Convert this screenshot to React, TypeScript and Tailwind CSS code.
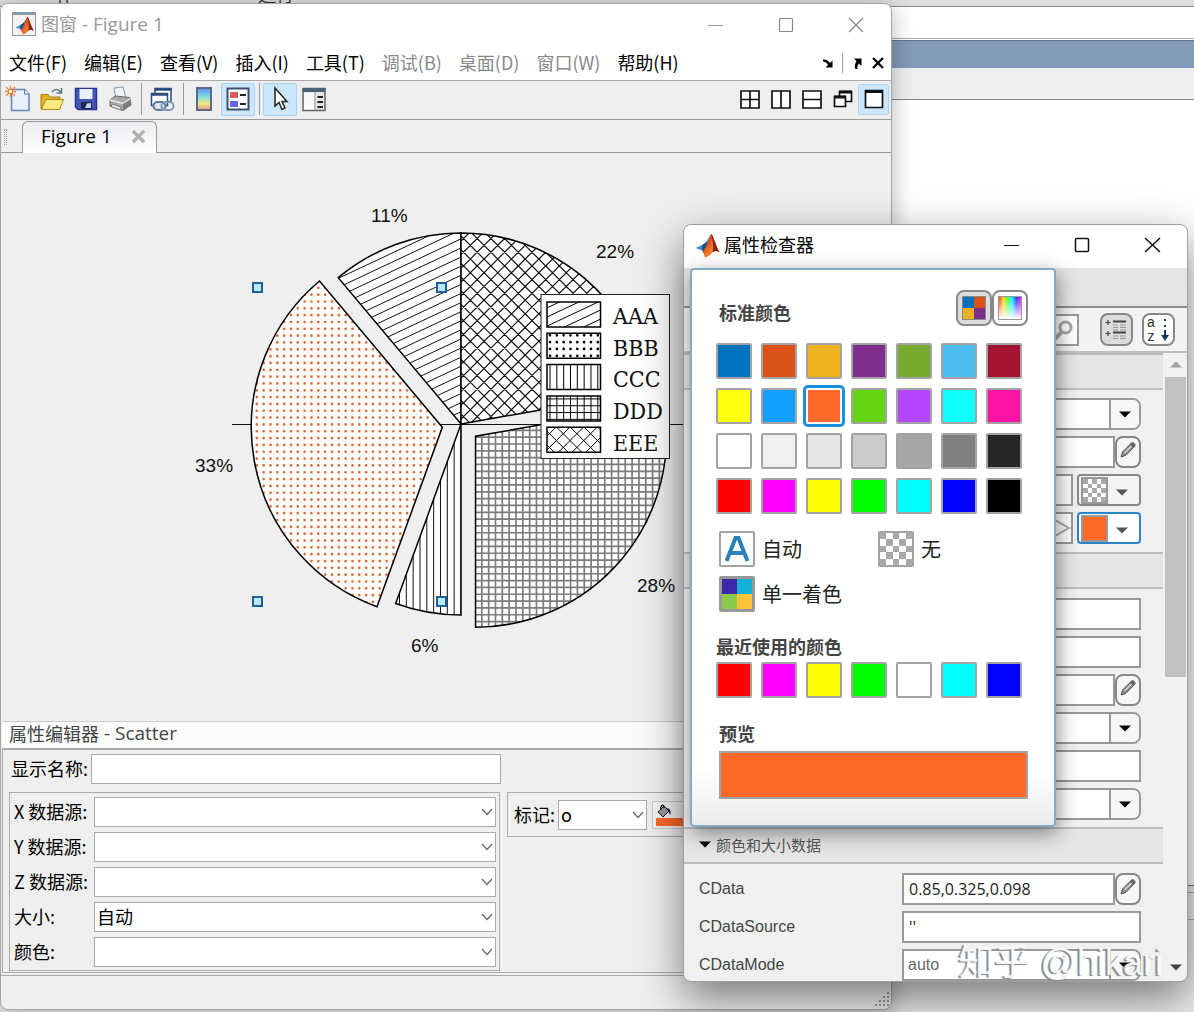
import { useState } from "react";
import type { ReactNode } from "react";

const STANDARD_COLORS = [
  "#0072bd", "#d95319", "#edb120", "#7e2f8e", "#77ac30", "#4dbeee", "#a2142f",
  "#ffff11", "#139fff", "#ff6929", "#64d413", "#b746ff", "#0fffff", "#ff13a6",
  "#ffffff", "#f0f0f0", "#e6e6e6", "#cccccc", "#a6a6a6", "#808080", "#262626",
  "#ff0000", "#ff00ff", "#ffff00", "#00ff00", "#00ffff", "#0000ff", "#000000",
];
const RECENT_COLORS = ["#ff0000", "#ff00ff", "#ffff00", "#00ff00", "#ffffff", "#00ffff", "#0000ff"];

// ---- Icons ----
const MatlabLogo = ({ size }: { size: number }) => (
  <svg width={size} height={size} viewBox="0 0 24 24">
    <defs>
      <linearGradient id="mlRed" x1="0" y1="0" x2="1" y2="1">
        <stop offset="0" stopColor="#5b1a12" />
        <stop offset="0.35" stopColor="#e0501e" />
        <stop offset="0.6" stopColor="#f08030" />
        <stop offset="1" stopColor="#9c1c10" />
      </linearGradient>
    </defs>
    <path d="M0.5 14.5L7 11.5L10 9.5C12 8 13 4 15.5 1.5L14 14L9 19L6.5 16.5Z" fill="#3f8ccb" />
    <path d="M7 11.5L10 9.5L12 7L10 17L7 17Z" fill="#1c4a78" />
    <path d="M15.5 1C17.5 2 19 10 23.5 18.5C20 16.5 18 17 15 20.5C13 22.5 11.5 23 9.5 23.5C9 21 8.5 20 7 17.5C11 16 12.5 6 15.5 1Z" fill="url(#mlRed)" />
    <path d="M15.5 1C17.5 2 19 10 23.5 18.5C20.5 16.8 19 16.8 17 18.5C18 12 17 6 15.5 1Z" fill="#8f2014" />
  </svg>
);

const NewIcon = () => (
  <svg width="26" height="26" viewBox="0 0 26 26">
    <path d="M6.5 3.5H19.5L24 8V24.5H6.5Z" fill="#e6f0fb" stroke="#6484b4" strokeWidth="1.5" />
    <path d="M19.5 3.5V8H24" fill="#fff" stroke="#4a6fa8" />
    <path d="M1 1L10 10M10 1L1 10M5.5 0V11M0 5.5H11" stroke="#e8884a" strokeWidth="1.3" />
    <circle cx="5.5" cy="5.5" r="2.3" fill="#fff3c0" stroke="#e06a28" />
  </svg>
);

const OpenIcon = () => (
  <svg width="26" height="26" viewBox="0 0 26 26">
    <path d="M2 23V8.5H9L11 11H21V23Z" fill="#e3b326" stroke="#a87d12" />
    <path d="M2.5 23.5L7 13.5H24.5L20.5 23.5Z" fill="#ffe980" stroke="#b58a16" />
    <path d="M13 6C16 2.5 19 2.5 21.5 6M22.5 2V7H17.5" fill="none" stroke="#66788c" strokeWidth="1.5" />
  </svg>
);

const SaveIcon = () => (
  <svg width="26" height="26" viewBox="0 0 26 26">
    <path d="M2.5 2.5H23.5V23.5H5L2.5 21Z" fill="#4556b5" stroke="#27348c" strokeWidth="1.5" />
    <path d="M6.5 3H19.5V13H6.5Z" fill="#e8f0fa" />
    <path d="M8 16H19V23H8Z" fill="#20264f" />
    <path d="M14 17.5L18 17V22H12Z" fill="#c8d4ea" />
  </svg>
);

const PrintIcon = () => (
  <svg width="26" height="26" viewBox="0 0 26 26">
    <path d="M7 2L16 1L19 12L9 13Z" fill="#eef4fb" stroke="#8899aa" />
    <path d="M3 14L8 10L23 11.5L24 19L16 24.5L3 20Z" fill="#a9a9a9" stroke="#6b6b6b" />
    <path d="M3 14L16 17.5L24 12.5" fill="none" stroke="#e8e8e8" strokeWidth="1.5" />
    <path d="M5 18L14 21V24L4 20.5Z" fill="#f2f2f2" stroke="#777" />
    <path d="M16 18V24L24 19V13Z" fill="#7c7c7c" />
  </svg>
);

const LinkIcon = () => (
  <svg width="26" height="26" viewBox="0 0 26 26">
    <rect x="6" y="2.5" width="16" height="13" fill="#fff" stroke="#2e4a7c" strokeWidth="1.5" />
    <path d="M5.5 3.5H22.5" stroke="#2e4a7c" strokeWidth="2.5" />
    <rect x="2.5" y="7.5" width="16" height="12" fill="#fff" stroke="#2e4a7c" strokeWidth="1.5" />
    <path d="M2 8.5H19" stroke="#2e4a7c" strokeWidth="2.5" />
    <rect x="4.5" y="16" width="12" height="8" rx="4" fill="#dfe8f2" stroke="#5d7898" strokeWidth="2" />
    <rect x="12.5" y="16" width="12" height="8" rx="4" fill="none" stroke="#7f98b4" strokeWidth="2" />
  </svg>
);

const ColorbarIcon = () => (
  <svg width="18" height="26" viewBox="0 0 18 26">
    <defs>
      <linearGradient id="cbar" x1="0" y1="0" x2="0" y2="1">
        <stop offset="0" stopColor="#5b8ff0" />
        <stop offset="0.4" stopColor="#7fe0e0" />
        <stop offset="0.7" stopColor="#f0e888" />
        <stop offset="1" stopColor="#f09a80" />
      </linearGradient>
    </defs>
    <rect x="2" y="2" width="14" height="22" fill="url(#cbar)" stroke="#5a6a88" strokeWidth="2" />
  </svg>
);

const LegendIcon = () => (
  <svg width="26" height="26" viewBox="0 0 26 26">
    <rect x="2.5" y="2.5" width="21" height="21" fill="#fff" stroke="#3d4f70" strokeWidth="2" />
    <rect x="5" y="6" width="8" height="6" fill="#dc5a5a" />
    <rect x="5" y="15" width="8" height="6" fill="#6464e0" />
    <path d="M15 9H21M15 18H21" stroke="#222" strokeWidth="2" />
  </svg>
);

const PointerIcon = () => (
  <svg width="20" height="26" viewBox="0 0 20 26">
    <path d="M5 2V20L9 16.5L12 23.5L15 22L12 15.5H17Z" fill="#fff" stroke="#222" strokeWidth="1.5" />
  </svg>
);

const InspectorIcon = () => (
  <svg width="26" height="26" viewBox="0 0 26 26">
    <rect x="2" y="2.5" width="22" height="22" fill="#e4e4e4" stroke="#666" strokeWidth="1.5" />
    <path d="M1.5 4H24.5" stroke="#4a6278" strokeWidth="4" />
    <rect x="3" y="7" width="10" height="16.5" fill="#fafafa" />
    <path d="M14 6V24" stroke="#999" />
    <path d="M16.5 11H22M16.5 16H22M16.5 21H22" stroke="#222" strokeWidth="2" />
  </svg>
);

const PencilIcon = () => (
  <svg width="18" height="18" viewBox="0 0 18 18">
    <path d="M2 16L3.5 11L12.5 2C14 0.8 17 3.5 15.8 5.2L7 14.3Z" fill="#8a8a8a" stroke="#555" />
    <path d="M5.5 12L12.5 5" stroke="#d8d8d8" strokeWidth="1.5" />
    <path d="M11 3.5L14.5 7L16 5.2C16.8 3.5 14 0.8 12.5 2Z" fill="#666" />
  </svg>
);

const Triangle = ({ className }: { className: string }) => (
  <svg className={className} width="12" height="7" viewBox="0 0 12 7">
    <path d="M0 0.5H12L6 6.5Z" fill="currentColor" />
  </svg>
);

const Checker = ({ size }: { size: number }) => (
  <svg width={size} height={size} viewBox="0 0 5 5" shapeRendering="crispEdges">
    <rect width="5" height="5" fill="#fff" />
    {Array.from({ length: 25 }, (_, i) =>
      i % 2 === 0 ? <rect key={i} x={i % 5} y={Math.floor(i / 5)} width="1" height="1" fill="#a9a9a9" /> : null
    )}
  </svg>
);

// ---- Pie chart ----
const CX = 461;
const CY = 424;
const R = 191;

const slicePath = (from: number, to: number, explode = 0) => {
  const rad = (d: number) => (d * Math.PI) / 180;
  const mid = rad((from + to) / 2);
  const cx = CX + Math.cos(mid) * explode;
  const cy = CY - Math.sin(mid) * explode;
  const x1 = cx + R * Math.cos(rad(from));
  const y1 = cy - R * Math.sin(rad(from));
  const x2 = cx + R * Math.cos(rad(to));
  const y2 = cy - R * Math.sin(rad(to));
  return `M${cx} ${cy}L${x1} ${y1}A${R} ${R} 0 0 0 ${x2} ${y2}Z`;
};

type Box = { x: number; y: number; w: number; h: number };

// y = oy + slope * (x - box.x) + k * step, over the whole box
const sloped = (b: Box, slope: number, step: number, oy = 0) => {
  const reach = Math.ceil((b.h + Math.abs(slope) * b.w) / step) + 1;
  let d = "";
  for (let k = -reach; k <= reach; k++) {
    const y = b.y + oy + k * step;
    d += `M${b.x} ${y}L${b.x + b.w} ${y + slope * b.w}`;
  }
  return d;
};

const vertical = (b: Box, step: number, ox = 0) => {
  let d = "";
  for (let x = b.x + ox; x < b.x + b.w; x += step) d += `M${x} ${b.y}V${b.y + b.h}`;
  return d;
};

type Slice = { name: string; d: string; box: Box; stroke: string; width: number };

const SLICES: Slice[] = [
  { name: "AAA", d: slicePath(90, 130), box: { x: 338, y: 233, w: 123, h: 191 }, stroke: "#111", width: 1 },
  { name: "BBB", d: slicePath(130, 250, 19), box: { x: 250, y: 280, w: 196, h: 330 }, stroke: "#dd6a3c", width: 2.7 },
  { name: "CCC", d: slicePath(250, 270), box: { x: 396, y: 424, w: 66, h: 192 }, stroke: "#111", width: 1 },
  { name: "DDD", d: slicePath(270, 370, 19), box: { x: 475, y: 402, w: 192, h: 227 }, stroke: "#7c7c7c", width: 1.7 },
  { name: "EEE", d: slicePath(10, 90), box: { x: 461, y: 232, w: 192, h: 192 }, stroke: "#111", width: 1.2 },
];

const hatchPath = (name: string, b: Box, inKey: boolean) => {
  switch (name) {
    case "AAA":
      return sloped(b, -0.47, 9.1, inKey ? 15 : 0);
    case "BBB":
      return vertical(b, 6.83, inKey ? 3 : 0);
    case "CCC":
      return vertical(b, 6.83, inKey ? 3 : 3.5);
    case "DDD":
      return vertical(b, 6.83, inKey ? 3 : 0) + sloped(b, 0, 6.83, inKey ? 3 : 1);
    default:
      return sloped(b, 1, 13.7, 4) + sloped(b, -1, 13.7, 9);
  }
};

const Hatched = ({ slice, d, box, inKey = false }: { slice: Slice; d: string; box: Box; inKey?: boolean }) => {
  const clip = `${inKey ? "key" : "slice"}-${slice.name}`;
  const dotted = slice.name === "BBB";
  return (
    <g>
      <clipPath id={clip}><path d={d} /></clipPath>
      <path d={d} fill={dotted && !inKey ? "#fffdfa" : "#fff"} />
      <path
        d={hatchPath(slice.name, box, inKey)}
        clipPath={`url(#${clip})`}
        fill="none"
        stroke={inKey ? "#000" : slice.stroke}
        strokeWidth={inKey && !dotted ? 1 : slice.width}
        strokeLinecap={dotted ? "round" : "butt"}
        strokeDasharray={dotted ? "0 6.83" : undefined}
        strokeDashoffset={dotted ? (inKey ? -2 : -1) : undefined}
      />
      <path d={d} fill="none" stroke="#000" strokeWidth="1.5" />
    </g>
  );
};

const PERCENTS = [
  { x: 371, y: 222, text: "11%" },
  { x: 596, y: 258, text: "22%" },
  { x: 195, y: 472, text: "33%" },
  { x: 637, y: 592, text: "28%" },
  { x: 411, y: 652, text: "6%" },
];

const HANDLES = [[257, 287], [441, 287], [257, 601], [441, 601]];

const PieChart = () => (
  <svg width="890" height="567" viewBox="1 153 890 567" className="shrink-0">
    <path d="M232 424.5H700" stroke="#111" />
    {SLICES.map((s) => (
      <Hatched key={s.name} slice={s} d={s.d} box={s.box} />
    ))}
    {HANDLES.map(([x, y]) => (
      <rect key={`${x}-${y}`} x={x - 4} y={y - 4} width="9" height="9" fill="#b9e6fb" stroke="#1c5f99" strokeWidth="2" />
    ))}

    <g className="font-['Liberation_Sans',sans-serif] text-[19px]" fill="#111">
      {PERCENTS.map((p) => (
        <text key={p.text} x={p.x} y={p.y}>{p.text}</text>
      ))}
    </g>

    {/* legend */}
    <rect x="541" y="294.5" width="128.5" height="164" fill="#fff" stroke="#222" />
    <g className="font-['DejaVu_Serif_Condensed','DejaVu_Serif',serif] text-[23px]" fill="#111">
      {SLICES.map((s, i) => {
        const box = { x: 547, y: 302 + i * 31.3, w: 53.5, h: 25 };
        return (
          <g key={s.name}>
            <Hatched slice={s} d={`M${box.x} ${box.y}h${box.w}v${box.h}h${-box.w}Z`} box={box} inKey />
            <text x="613" y={324 + i * 31.7}>{s.name}</text>
          </g>
        );
      })}
    </g>
  </svg>
);

// ---- Figure window ----
const MENUS = [
  { label: "文件(F)" },
  { label: "编辑(E)" },
  { label: "查看(V)" },
  { label: "插入(I)" },
  { label: "工具(T)" },
  { label: "调试(B)", disabled: true },
  { label: "桌面(D)", disabled: true },
  { label: "窗口(W)", disabled: true },
  { label: "帮助(H)" },
];

const ToolButton = ({ label, active, children }: { label: string; active?: boolean; children: ReactNode }) => (
  <button
    aria-label={label}
    className={`flex h-[33px] w-[34px] items-center justify-center rounded-xs border ${
      active ? "border-[#a8d4f5] bg-[#cce6fb]" : "border-transparent"
    }`}
  >
    {children}
  </button>
);

const ToolSeparator = () => (
  <div className="flex w-2 justify-center">
    <div className="h-8 w-px bg-[#999]" />
  </div>
);

const LAYOUTS = [
  { label: "Tile", d: "M1 1H19V18H1ZM10 1V18M1 9.5H19" },
  { label: "Left/Right", d: "M1 1H19V18H1ZM10 1V18" },
  { label: "Top/Bottom", d: "M1 1H19V18H1ZM1 9.5H19" },
];

const Toolbar = () => (
  <div className="flex h-[39px] items-center justify-between border-b border-[#999] bg-[#eee] pr-[2px] pb-[2px]">
    <div className="flex items-center">
      <ToolButton label="New"><NewIcon /></ToolButton>
      <ToolButton label="Open"><OpenIcon /></ToolButton>
      <ToolButton label="Save"><SaveIcon /></ToolButton>
      <ToolButton label="Print"><PrintIcon /></ToolButton>
      <ToolSeparator />
      <ToolButton label="Link"><LinkIcon /></ToolButton>
      <ToolSeparator />
      <ToolButton label="Colorbar"><ColorbarIcon /></ToolButton>
      <ToolButton label="Legend" active><LegendIcon /></ToolButton>
      <ToolSeparator />
      <ToolButton label="Edit plot" active><PointerIcon /></ToolButton>
      <ToolButton label="Inspector"><InspectorIcon /></ToolButton>
    </div>
    <div className="flex items-center">
      {LAYOUTS.map((l) => (
        <button key={l.label} aria-label={l.label} className="flex h-[30px] w-[31px] items-center justify-center">
          <svg width="20" height="19" viewBox="0 0 20 19">
            <path d={l.d} fill="#fff" stroke="#111" strokeWidth="1.7" />
          </svg>
        </button>
      ))}
      <button aria-label="Float" className="flex h-[30px] w-[31px] items-center justify-center">
        <svg width="20" height="20" viewBox="0 0 20 20">
          <path d="M6.5 2.5H18.5V12.5H6.5Z" fill="#fff" stroke="#111" strokeWidth="1.7" />
          <path d="M6 3H19" stroke="#111" strokeWidth="3" />
          <path d="M1.5 7.5H12.5V17.5H1.5Z" fill="#fff" stroke="#111" strokeWidth="1.7" />
          <path d="M1 8H13" stroke="#111" strokeWidth="3" />
        </svg>
      </button>
      <button aria-label="Maximize" className="flex h-[31px] w-[31px] items-center justify-center rounded-xs border border-[#a8d4f5] bg-[#cce6fb]">
        <svg width="20" height="20" viewBox="0 0 20 20">
          <path d="M1.5 1.5H18.5V18.5H1.5Z" fill="#fff" stroke="#111" strokeWidth="1.7" />
          <path d="M1 2.5H19" stroke="#111" strokeWidth="3" />
        </svg>
      </button>
    </div>
  </div>
);

const DropField = ({ id, value, onChange, options }: {
  id: string;
  value: string;
  onChange: (v: string) => void;
  options: string[];
}) => (
  <div className="relative flex-1">
    <select
      id={id}
      value={value}
      onChange={(e) => onChange(e.target.value)}
      className="h-[30px] w-full appearance-none rounded-none border border-[#aaa] bg-white pb-[2px] pl-[2px] text-lg leading-6 outline-none"
    >
      {options.map((o) => (
        <option key={o}>{o}</option>
      ))}
    </select>
    <svg className="pointer-events-none absolute top-[11px] right-[3px]" width="12" height="8" viewBox="0 0 12 8">
      <path d="M1 1L6 6.5L11 1" fill="none" stroke="#666" strokeWidth="1.2" />
    </svg>
  </div>
);

const SOURCES = [
  { id: "xsrc", label: "X 数据源:", value: "" },
  { id: "ysrc", label: "Y 数据源:", value: "" },
  { id: "zsrc", label: "Z 数据源:", value: "" },
  { id: "size", label: "大小:", value: "自动" },
  { id: "color", label: "颜色:", value: "" },
];

const PropertyEditor = ({ color }: { color: string }) => {
  const [values, setValues] = useState<Record<string, string>>(
    Object.fromEntries(SOURCES.map((s) => [s.id, s.value]))
  );
  const [marker, setMarker] = useState("o");

  return (
    <section className="ml-px border-t border-[#ccc] text-lg leading-6">
      <h2 className="flex h-7 items-center border-b-2 border-[#aaa] bg-[#fbfbfb] pb-1 pl-[7px] whitespace-pre text-[#444]">
        属性编辑器<span className="font-['Open_Sans',sans-serif] text-[19px]"> - Scatter</span>
      </h2>
      <div className="h-[223px] border-b border-l border-[#aaa] pt-1 pl-[6px]">
        <div className="flex items-center pl-[2px]">
          <label htmlFor="dname" className="w-20 pb-[2px]">显示名称:</label>
          <input id="dname" className="h-[30px] w-[410px] border border-[#aaa] bg-white px-1 outline-none" />
        </div>
        <div className="mt-2 flex items-start gap-[7px]">
          <div className="flex h-[179px] w-[491px] shrink-0 flex-col gap-[5px] border border-[#aaa] py-1 pr-[3px] pl-1">
            {SOURCES.map((s) => (
              <div key={s.id} className="flex items-center">
                <label htmlFor={s.id} className="w-20 pb-[3px]">{s.label}</label>
                <DropField
                  id={s.id}
                  value={values[s.id]}
                  onChange={(v) => setValues({ ...values, [s.id]: v })}
                  options={["", "自动"]}
                />
              </div>
            ))}
          </div>
          <div className="flex h-[45px] flex-1 items-center border border-[#aaa] pl-[6px]">
            <label htmlFor="marker" className="w-[44px] pb-[2px] whitespace-nowrap">标记:</label>
            <div className="flex w-[89px]">
              <DropField id="marker" value={marker} onChange={setMarker} options={["o", "+", "*"]} />
            </div>
            <button aria-label="Fill color" className="ml-[5px] flex h-7 w-10 flex-col items-start justify-center rounded-xs border border-[#ccc] bg-[#f4f4f4] pl-[3px]">
              <svg width="16" height="14" viewBox="0 0 16 14">
                <path d="M2 8L8 2L13 7L7 13Z" fill="#9a9a9a" stroke="#111" />
                <path d="M5 6C4 1 8 -1 8 4" fill="none" stroke="#111" strokeWidth="1.2" />
                <path d="M11 4C15 5 15 8 14 11Z" fill="#14145a" />
              </svg>
              <span className="h-2 w-8" style={{ backgroundColor: color }} />
            </button>
          </div>
        </div>
      </div>
    </section>
  );
};

const FigureWindow = ({ color }: { color: string }) => (
  <main className="absolute top-[3px] right-[302px] bottom-[2px] left-0 flex flex-col overflow-hidden rounded-lg border border-[#a5a5a5] bg-[#efefef] shadow-[0_4px_22px_rgba(0,0,0,0.3)]">
    <header className="flex h-11 items-center justify-between bg-white pr-[27px] pb-[3px] pl-[11px] text-[#999]">
      <div className="flex items-center gap-[5px] text-lg">
        <span className="flex size-6 items-end justify-center border border-t-3 border-[#8a9aa8] bg-[#f2f2f2]">
          <MatlabLogo size={19} />
        </span>
        <h1 className="whitespace-pre">
          图窗<span className="font-['Open_Sans',sans-serif] text-[19px]"> - Figure 1</span>
        </h1>
      </div>
      <div className="flex items-center gap-[54px]">
        <button aria-label="最小化">
          <svg width="16" height="16" viewBox="0 0 16 16"><path d="M0 8.5H15" stroke="#999" /></svg>
        </button>
        <button aria-label="最大化">
          <svg width="16" height="16" viewBox="0 0 16 16"><rect x="1.5" y="1.5" width="13" height="13" rx="1" fill="none" stroke="#888" strokeWidth="1.2" /></svg>
        </button>
        <button aria-label="关闭">
          <svg width="16" height="16" viewBox="0 0 16 16"><path d="M1 1L15 15M15 1L1 15" stroke="#888" strokeWidth="1.2" /></svg>
        </button>
      </div>
    </header>
    <div className="flex h-[33px] items-center justify-between border-b border-[#aaa] bg-white pr-[6px] pb-1 pl-2">
      <nav className="flex gap-[17px] text-lg">
        {MENUS.map((m) => (
          <button key={m.label} className={m.disabled ? "text-[#888]" : "text-black"} disabled={m.disabled}>
            {m.label}
          </button>
        ))}
      </nav>
      <div className="flex items-center pt-[2px]">
        <button aria-label="Dock">
          <svg width="12" height="12" viewBox="0 0 12 12"><path d="M1 2.5C4 2 6 3.5 8 6L10.5 3.5V10.5H3.5L6 8C5 6 3 4.5 1 4.5Z" fill="#000" /></svg>
        </button>
        <span className="mx-2 h-5 w-px bg-[#999]" />
        <button aria-label="Undock">
          <svg width="12" height="12" viewBox="0 0 12 12"><path d="M3 1.5H10.5V9L8 6.5C6.5 8 6 9.5 6.5 12H4.5C3 9 4 7 5.5 4Z" fill="#000" /></svg>
        </button>
        <button aria-label="Close" className="ml-2">
          <svg width="14" height="14" viewBox="0 0 14 14"><path d="M2 2L12 12M12 2L2 12" stroke="#000" strokeWidth="2.2" /></svg>
        </button>
      </div>
    </div>
    <Toolbar />
    <div className="flex h-[33px] items-end border-b border-[#999]">
      <div className="mb-[7px] ml-[3px] h-4 w-[3px] border-x border-dotted border-[#999]" />
      <div role="tab" className="-mb-px ml-[15px] flex h-8 w-[135px] items-center justify-between rounded-t-md border border-b-0 border-[#999] bg-linear-to-b from-[#ececf2] to-white pr-[10px] pb-[3px] pl-[18px]">
        <span className="font-['Open_Sans',sans-serif] text-[19px] leading-6">Figure 1</span>
        <button aria-label="Close tab">
          <svg width="15" height="15" viewBox="0 0 15 15"><path d="M2 2L13 13M13 2L2 13" stroke="#b0b0b0" strokeWidth="3.5" /></svg>
        </button>
      </div>
    </div>
    <div className="min-h-[567px] flex-1 overflow-hidden">
      <PieChart />
    </div>
    <PropertyEditor color={color} />
    <footer className="mt-[2px] flex h-[34px] items-end justify-end border-t border-[#aaa]">
      <svg width="17" height="17" viewBox="0 0 17 17" fill="#999">
        {[0, 1, 2, 3].map((r) =>
          Array.from({ length: r + 1 }, (_, c) => (
            <rect key={`${r}-${c}`} x={13 - c * 4} y={r * 4} width="2" height="2" />
          ))
        )}
      </svg>
    </footer>
  </main>
);

// ---- Inspector ----
const fieldClass = "h-8 min-w-0 flex-1 border-2 border-[#999] bg-white px-[5px] font-['Open_Sans',sans-serif] text-base text-[#222] outline-none";

const Row = ({ id, label, children }: { id: string; label?: string; children: ReactNode }) => (
  <div className="grid grid-cols-[203px_minmax(0,1fr)] items-center">
    <label htmlFor={id} className="font-['Liberation_Sans',sans-serif] text-base text-[#444]">{label}</label>
    <div className="flex">{children}</div>
  </div>
);

const TextField = ({ id, label, value = "", pencil }: { id: string; label?: string; value?: string; pencil?: boolean }) => (
  <Row id={id} label={label}>
    <input id={id} defaultValue={value} className={fieldClass} />
    {pencil && (
      <button aria-label="编辑" className="flex h-8 w-[26px] shrink-0 items-center justify-center rounded-lg border-2 border-[#888] bg-[#f6f6f6] pb-1">
        <PencilIcon />
      </button>
    )}
  </Row>
);

const ComboField = ({ id, label, value = "" }: { id: string; label?: string; value?: string }) => (
  <Row id={id} label={label}>
    <div className="relative flex flex-1">
      <select id={id} className="h-8 w-full appearance-none rounded-r-lg border-2 border-[#999] bg-white px-1 font-['Liberation_Sans',sans-serif] text-base text-[#666] outline-none">
        <option>{value}</option>
      </select>
      <span className="pointer-events-none absolute inset-y-[2px] right-[2px] flex w-[30px] items-center justify-center rounded-r-md border-l-2 border-[#999] bg-[#f6f6f6]">
        <Triangle className="text-black" />
      </span>
    </div>
  </Row>
);

const ColorField = ({ id, marker, active, children }: { id: string; marker?: boolean; active?: boolean; children: ReactNode }) => (
  <Row id={id}>
    <div className="mr-1 flex h-8 flex-1 items-center justify-end border-2 border-[#999] bg-white">
      {marker && (
        <svg width="16" height="20" viewBox="0 0 16 20"><path d="M0 2L14 10L0 18" fill="none" stroke="#aaa" strokeWidth="2" /></svg>
      )}
    </div>
    <button
      id={id}
      aria-label="颜色"
      className={`flex h-8 w-16 items-center gap-2 rounded-sm border-2 pl-[2px] ${active ? "border-[#2a86c8] bg-white" : "border-[#888] bg-[#f4f4f4]"}`}
    >
      <span className="size-[27px] overflow-hidden border-2 border-[#999]">{children}</span>
      <Triangle className="mt-1 text-[#555]" />
    </button>
  </Row>
);

const SectionHeader = ({ title }: { title?: string }) => (
  <h3 className="flex h-[37px] items-center gap-[5px] border-y-2 border-[#bdbdbd] bg-[#e5e5e5] pb-[2px] pl-[15px] text-[15px] leading-5 text-[#555]">
    {title && <Triangle className="text-black" />}
    {title}
  </h3>
);

const Swatch = ({ color, selected, onSelect }: { color: string; selected?: boolean; onSelect: (c: string) => void }) => (
  <button
    aria-label={color}
    onClick={() => onSelect(color)}
    className={`size-9 rounded-xs border-2 ${selected ? "border-white outline-3 outline-[#1b8fe0]" : "border-[#a3a3a3]"}`}
    style={{ backgroundColor: color }}
  />
);

const ColorPicker = ({ color, onSelect }: { color: string; onSelect: (c: string) => void }) => (
  <div
    role="dialog"
    aria-label="标准颜色"
    className="absolute top-[43px] left-[6px] w-[366px] rounded-sm border-2 border-[#86a9c4] bg-linear-to-b from-white from-90% to-[#ebebeb] pt-5 pr-[26px] pb-[26px] pl-6 shadow-[2px_6px_20px_rgba(0,0,0,0.45)]"
  >
    <div className="flex items-center justify-between pl-[3px]">
      <h3 className="mt-2 text-lg leading-6 font-bold text-[#444]">标准颜色</h3>
      <div className="flex">
        <button aria-label="标准" className="flex size-9 items-center justify-center rounded-lg border-2 border-[#888] bg-[#dcdcdc]">
          <span className="grid size-6 grid-cols-2 border border-[#888]">
            <span className="bg-[#0072bd]" />
            <span className="bg-[#d95319]" />
            <span className="bg-[#edb120]" />
            <span className="bg-[#7e2f8e]" />
          </span>
        </button>
        <button aria-label="自定义" className="flex size-9 items-center justify-center rounded-lg border-2 border-[#888] bg-white">
          <span className="size-6 border border-[#999] bg-[linear-gradient(to_top,#fff,transparent),linear-gradient(to_right,#f33,#fd0,#4f4,#0ef,#33f,#f0f)]" />
        </button>
      </div>
    </div>
    <div className="mt-[17px] grid w-[306px] grid-cols-7 gap-[9px]">
      {STANDARD_COLORS.map((c) => (
        <Swatch key={c} color={c} selected={c === color} onSelect={onSelect} />
      ))}
    </div>
    <div className="mt-[17px] grid grid-cols-[159px_1fr] gap-y-[9px] pl-[3px] text-xl text-[#222]">
      <button className="flex items-center gap-[7px]">
        <span className="flex size-9 items-center justify-center rounded-xs border-2 border-[#a3a3a3] bg-white">
          <svg width="26" height="26" viewBox="0 0 26 26"><path d="M2.5 25L11.5 2H14.5L23.5 25M6.5 17H19.5" fill="none" stroke="#2a82bc" strokeWidth="4" /></svg>
        </span>
        自动
      </button>
      <button className="flex items-center gap-[7px]">
        <span className="size-9 overflow-hidden rounded-xs border-2 border-[#a3a3a3]"><Checker size={32} /></span>
        无
      </button>
      <button className="flex items-center gap-[7px] whitespace-nowrap">
        <span className="grid size-9 shrink-0 grid-cols-2 rounded-xs border-3 border-[#999]">
          <span className="bg-[#3e26a8]" />
          <span className="bg-[#16b0d8]" />
          <span className="bg-[#8ccb4a]" />
          <span className="bg-[#fec338]" />
        </span>
        单一着色
      </button>
    </div>
    <h3 className="mt-[22px] text-lg leading-6 font-bold text-[#444]">最近使用的颜色</h3>
    <div className="mt-1 grid w-[306px] grid-cols-7 gap-[9px]">
      {RECENT_COLORS.map((c) => (
        <Swatch key={c} color={c} onSelect={onSelect} />
      ))}
    </div>
    <h3 className="mt-[23px] pl-[3px] text-lg leading-6 font-bold text-[#444]">预览</h3>
    <div className="mt-[6px] ml-[3px] h-12 border-2 border-[#a3a3a3]" style={{ backgroundColor: color }} />
  </div>
);

const InspectorWindow = ({ color, onSelect }: { color: string; onSelect: (c: string) => void }) => (
  <aside className="absolute top-[224px] right-[6px] bottom-[30px] left-[683px] flex flex-col rounded-lg border border-[#a0a0a0] bg-[#f0f0f0] shadow-[0_16px_44px_rgba(0,0,0,0.5)]">
    <header className="flex h-[43px] shrink-0 items-center justify-between rounded-t-lg bg-white pr-[26px] pb-[3px] pl-[11px]">
      <div className="flex items-center gap-1 text-lg leading-6">
        <MatlabLogo size={25} />
        <h2 className="pb-[2px]">属性检查器</h2>
      </div>
      <div className="flex items-center gap-[54px]">
        <button aria-label="最小化">
          <svg width="17" height="16" viewBox="0 0 17 16"><path d="M1 8.5H16" stroke="#111" /></svg>
        </button>
        <button aria-label="最大化">
          <svg width="16" height="16" viewBox="0 0 16 16"><rect x="1.5" y="1.5" width="13" height="13" rx="1" fill="none" stroke="#111" strokeWidth="1.5" /></svg>
        </button>
        <button aria-label="关闭">
          <svg width="17" height="16" viewBox="0 0 17 16"><path d="M1 1L16 15M16 1L1 15" stroke="#111" strokeWidth="1.5" /></svg>
        </button>
      </div>
    </header>
    <div className="h-10 shrink-0 border-b-2 border-[#909090] bg-[#e5e5e5]" />
    <div className="flex h-[45px] shrink-0 items-center border-b-2 border-[#bdbdbd] bg-[#f3f3f3] pr-3 pl-4">
      <div className="relative mr-[21px] flex flex-1">
        <input aria-label="搜索" className={fieldClass} />
        <svg className="absolute top-[5px] right-[5px]" width="22" height="22" viewBox="0 0 22 22">
          <circle cx="13.5" cy="8.5" r="5.5" fill="none" stroke="#a8a8a8" strokeWidth="3" />
          <path d="M9.5 13L3 20" stroke="#a8a8a8" strokeWidth="4" />
        </svg>
      </div>
      <button aria-label="分组" className="flex size-[33px] items-center justify-center rounded-lg border-2 border-[#888] bg-[#dcdcdc]">
        <svg width="23" height="23" viewBox="0 0 23 23">
          <path d="M0.5 4.5H5.5M3 2V7M0.5 15.5H5.5M3 13V18" stroke="#444" strokeWidth="1.2" />
          <path d="M8 3.5H21M8 14.5H21" stroke="#444" strokeWidth="1.8" />
          <path d="M8 7H13M15 7H21M8 9.5H13M15 9.5H21M8 12H13M15 12H21M8 18H13M15 18H21M8 20.5H13M15 20.5H21" stroke="#999" />
        </svg>
      </button>
      <button aria-label="排序" className="ml-[9px] flex size-[33px] items-center justify-between rounded-lg border-2 border-[#888] bg-white px-[3px] font-['Liberation_Sans',sans-serif] text-sm leading-[14px] text-[#333]">
        <span className="flex flex-col pb-[2px]"><span>a</span><span>z</span></span>
        <svg width="10" height="24" viewBox="0 0 10 24">
          <path d="M5 1V3M5 7V9M5 12V20" stroke="#12365c" strokeWidth="2" />
          <path d="M1 17H9L5 23Z" fill="#12365c" />
        </svg>
      </button>
    </div>
    <div className="flex min-h-0 flex-1 overflow-hidden rounded-b-lg">
      <div className="min-w-0 flex-1">
        <SectionHeader />
        <div className="flex flex-col gap-[6px] py-2 pr-[22px] pl-[15px]">
          <ComboField id="f1" />
          <TextField id="f2" pencil />
          <ColorField id="f3"><Checker size={23} /></ColorField>
          <ColorField id="f4" marker active>
            <span className="block size-full" style={{ backgroundColor: color }} />
          </ColorField>
        </div>
        <SectionHeader />
        <div className="flex flex-col gap-[6px] pt-[9px] pb-[7px] pr-[22px] pl-[15px]">
          <TextField id="g1" />
          <TextField id="g2" />
          <TextField id="g3" pencil />
          <ComboField id="g4" />
          <TextField id="g5" />
          <ComboField id="g6" />
        </div>
        <SectionHeader title="颜色和大小数据" />
        <div className="flex flex-col gap-[6px] pt-[9px] pr-[22px] pl-[15px]">
          <TextField id="cdata" label="CData" value="0.85,0.325,0.098" pencil />
          <TextField id="cdatasource" label="CDataSource" value="''" />
          <ComboField id="cdatamode" label="CDataMode" value="auto" />
        </div>
      </div>
      {/* scroll bar */}
      <div className="flex w-6 flex-col items-center justify-between bg-[#f1f1f1] pr-px pl-[2px]">
        <div className="flex w-full flex-col items-center">
          <Triangle className="mt-2 mb-[9px] rotate-180 text-[#a0a0a0]" />
          <div className="h-[300px] w-full bg-[#c1c1c1]" />
        </div>
        <Triangle className="mb-[10px] text-[#444]" />
      </div>
    </div>
    <ColorPicker color={color} onSelect={onSelect} />
    <p className="pointer-events-none absolute right-6 -bottom-[2px] font-['Liberation_Sans','Noto_Sans_CJK_SC',sans-serif] text-4xl whitespace-nowrap text-white/90 [text-shadow:-2px_1px_1px_#888]">
      知乎 @hikari
    </p>
  </aside>
);

export default function App() {
  const [color, setColor] = useState("#ff6929");

  return (
    <div className="relative flex min-h-screen flex-col overflow-hidden bg-white font-['Noto_Sans_CJK_SC',sans-serif] text-black">
      {/* main application behind the windows */}
      <div className="flex h-[7px] items-end gap-[184px] overflow-hidden border-b border-[#888] bg-[#dedede] pl-[56px] text-lg leading-6 text-[#333]">
        <span>作</span>
        <span>运行</span>
      </div>
      <div className="h-8 border-b border-[#aaa] bg-white" />
      <div className="mt-px h-7 border-t border-[#5f7690] bg-[#829bb7]" />
      <div className="h-8 border-b border-[#888] bg-[#efefef]" />
      <div className="flex-1 bg-white" />
      <div className="h-[127px] border-t border-[#777] bg-[#eee] pt-[6px]">
        <div className="h-7 border-y border-[#aaa]" />
      </div>
      <FigureWindow color={color} />
      <InspectorWindow color={color} onSelect={setColor} />
    </div>
  );
}
